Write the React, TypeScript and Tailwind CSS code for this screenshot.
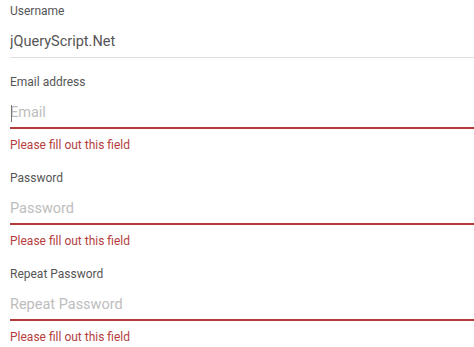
import React from "react";

interface Campo {
  label: string;
  placeholder: string;
  value?: string;
  type: string;
  error: boolean;
  caret?: boolean;
}

const CAMPOS: Campo[] = [
  { label: "Username", placeholder: "Username", value: "jQueryScript.Net", type: "text", error: false },
  { label: "Email address", placeholder: "Email", type: "email", error: true, caret: true },
  { label: "Password", placeholder: "Password", type: "password", error: true },
  { label: "Repeat Password", placeholder: "Repeat Password", type: "password", error: true },
];

export default function App() {
  return (
    <div className="w-[474px] h-[347px] overflow-hidden bg-white pl-[10px] pt-[3px] font-['Roboto',sans-serif]">
      {CAMPOS.map((c) => (
        <div key={c.label} className={c.error ? "mb-[17px]" : "mb-[16px]"}>
          <label className="block text-[12px] leading-[16px] text-[#555]">{c.label}</label>
          <div className="relative mt-[7px]">
            <input
              type={c.type}
              defaultValue={c.value}
              placeholder={c.placeholder}
              className={`block w-full h-[32px] bg-transparent outline-none text-[14.5px] text-[#555] placeholder:text-[#bdbdbd] ${
                c.error ? "border-b-2 border-[#b33b3b]" : "border-b border-[#e0e0e0]"
              }`}
            />
            {c.caret && <span className="absolute left-[1px] top-[8px] w-px h-[17px] bg-[#777]" />}
          </div>
          {c.error && (
            <p className="mt-[8px] text-[12px] leading-[16px] text-[#b53d3d]">Please fill out this field</p>
          )}
        </div>
      ))}
    </div>
  );
}
